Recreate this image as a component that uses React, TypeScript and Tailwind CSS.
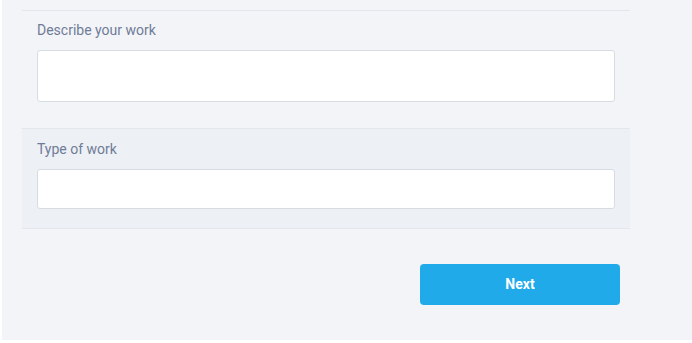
import React from "react";

const Field: React.FC<{ label: string; tall?: boolean }> = ({ label, tall }) => (
  <div className="flex flex-col">
    <label className="text-[14px] leading-[16px] text-[#6f7c97] mb-[12px]">{label}</label>
    <input
      type="text"
      className={`w-[578px] bg-white border border-[#d7dce3] rounded-[3px] outline-none ${
        tall ? "h-[52px]" : "h-[40px]"
      }`}
    />
  </div>
);

export default function App() {
  return (
    <div className="w-[692px] h-[343px] bg-white font-['Roboto',sans-serif]">
      <div className="ml-[2px] h-[340px] bg-[#f3f4f8] pt-[10px] pl-[20px]">
        <div className="w-[608px]">
          <div className="border-t border-[#e3e6ec] pt-[11px] pb-[26px] px-[15px]">
            <Field label="Describe your work" tall />
          </div>
          <div className="bg-[#edf0f5] border-y border-[#e3e6ec] pt-[12px] pb-[19px] px-[15px]">
            <Field label="Type of work" />
          </div>
          <div className="flex justify-end pr-[10px] pt-[35px]">
            <button className="w-[200px] h-[41px] rounded-[4px] bg-[#20aaea] text-white text-[14px] font-bold">
              Next
            </button>
          </div>
        </div>
      </div>
    </div>
  );
}
